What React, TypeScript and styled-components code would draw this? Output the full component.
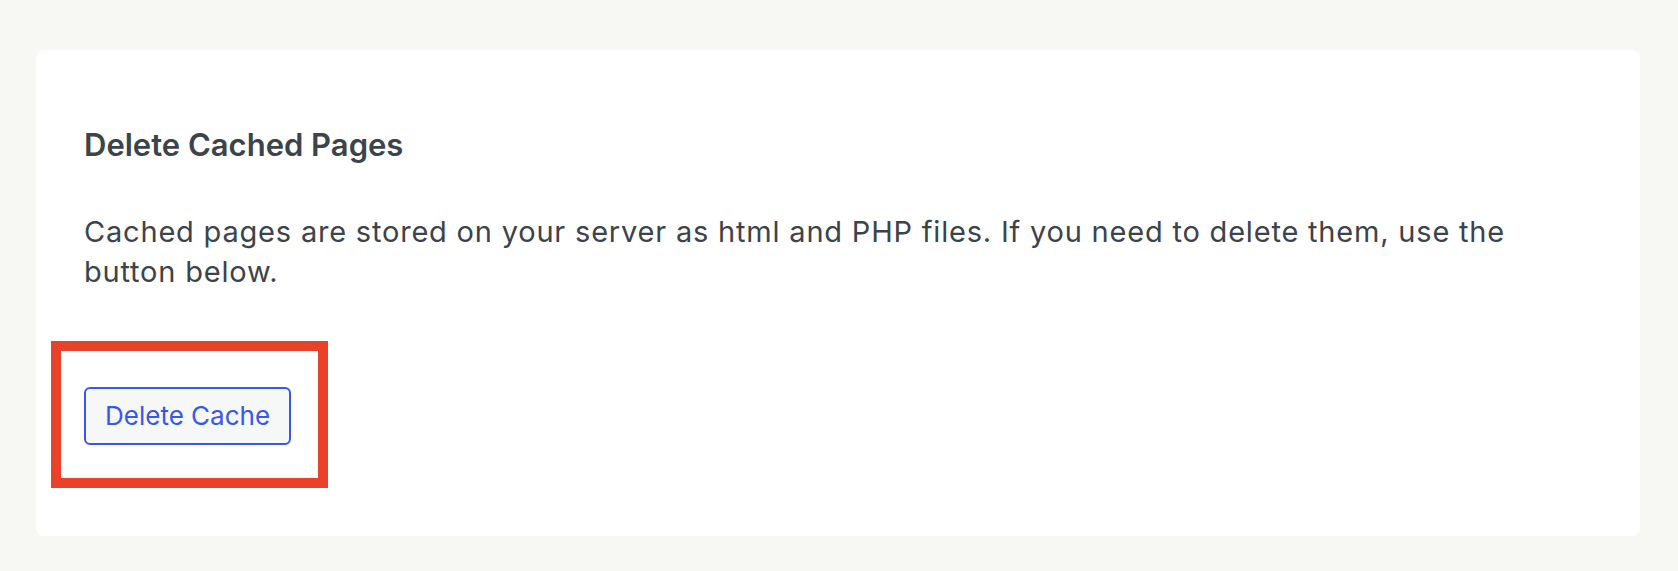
import React from "react";
import styled, { createGlobalStyle } from "styled-components";

const GlobalStyle = createGlobalStyle`
  html, body {
    margin: 0;
    padding: 0;
    background: #f7f7f3;
  }

  body {
    font-family: Inter, "Liberation Sans", sans-serif;
    color: #3c434a;
    -webkit-font-smoothing: antialiased;
  }
`;

const Page = styled.div`
  padding: 50px 38px 37px 36px;
`;

const Card = styled.section`
  background: #ffffff;
  border-radius: 8px;
  padding: 76px 48px 91px;
`;

const Heading = styled.h3`
  margin: 0;
  font-size: 31px;
  line-height: 38px;
  font-weight: 600;
  color: #3c434a;
`;

const Description = styled.p`
  margin: 48px 0 0;
  max-width: 1460px;
  font-size: 29px;
  line-height: 40px;
  font-weight: 400;
  letter-spacing: 0.8px;
`;

const Actions = styled.div`
  margin-top: 95px;
  display: flex;
`;

const Highlight = styled.div`
  position: relative;
  display: inline-flex;
`;

const HighlightFrame = styled.span`
  position: absolute;
  left: -33px;
  top: -46px;
  width: 277px;
  height: 147px;
  box-sizing: border-box;
  border: 10px solid #e9412a;
  pointer-events: none;
`;

const Button = styled.button`
  box-sizing: border-box;
  height: 58px;
  padding: 0 19px;
  background: #f6f7f7;
  border: 2px solid #3858e9;
  border-radius: 6px;
  color: #3858e9;
  font-family: Inter, "Liberation Sans", sans-serif;
  font-size: 26px;
  line-height: 54px;
  cursor: pointer;
`;

export default function App() {
  return (
    <>
      <GlobalStyle />
      <Page>
        <Card>
          <Heading>Delete Cached Pages</Heading>
          <Description>
            Cached pages are stored on your server as html and PHP files. If you
            need to delete them, use the button below.
          </Description>
          <Actions>
            <Highlight>
              <Button type="button">Delete Cache</Button>
              <HighlightFrame />
            </Highlight>
          </Actions>
        </Card>
      </Page>
    </>
  );
}
